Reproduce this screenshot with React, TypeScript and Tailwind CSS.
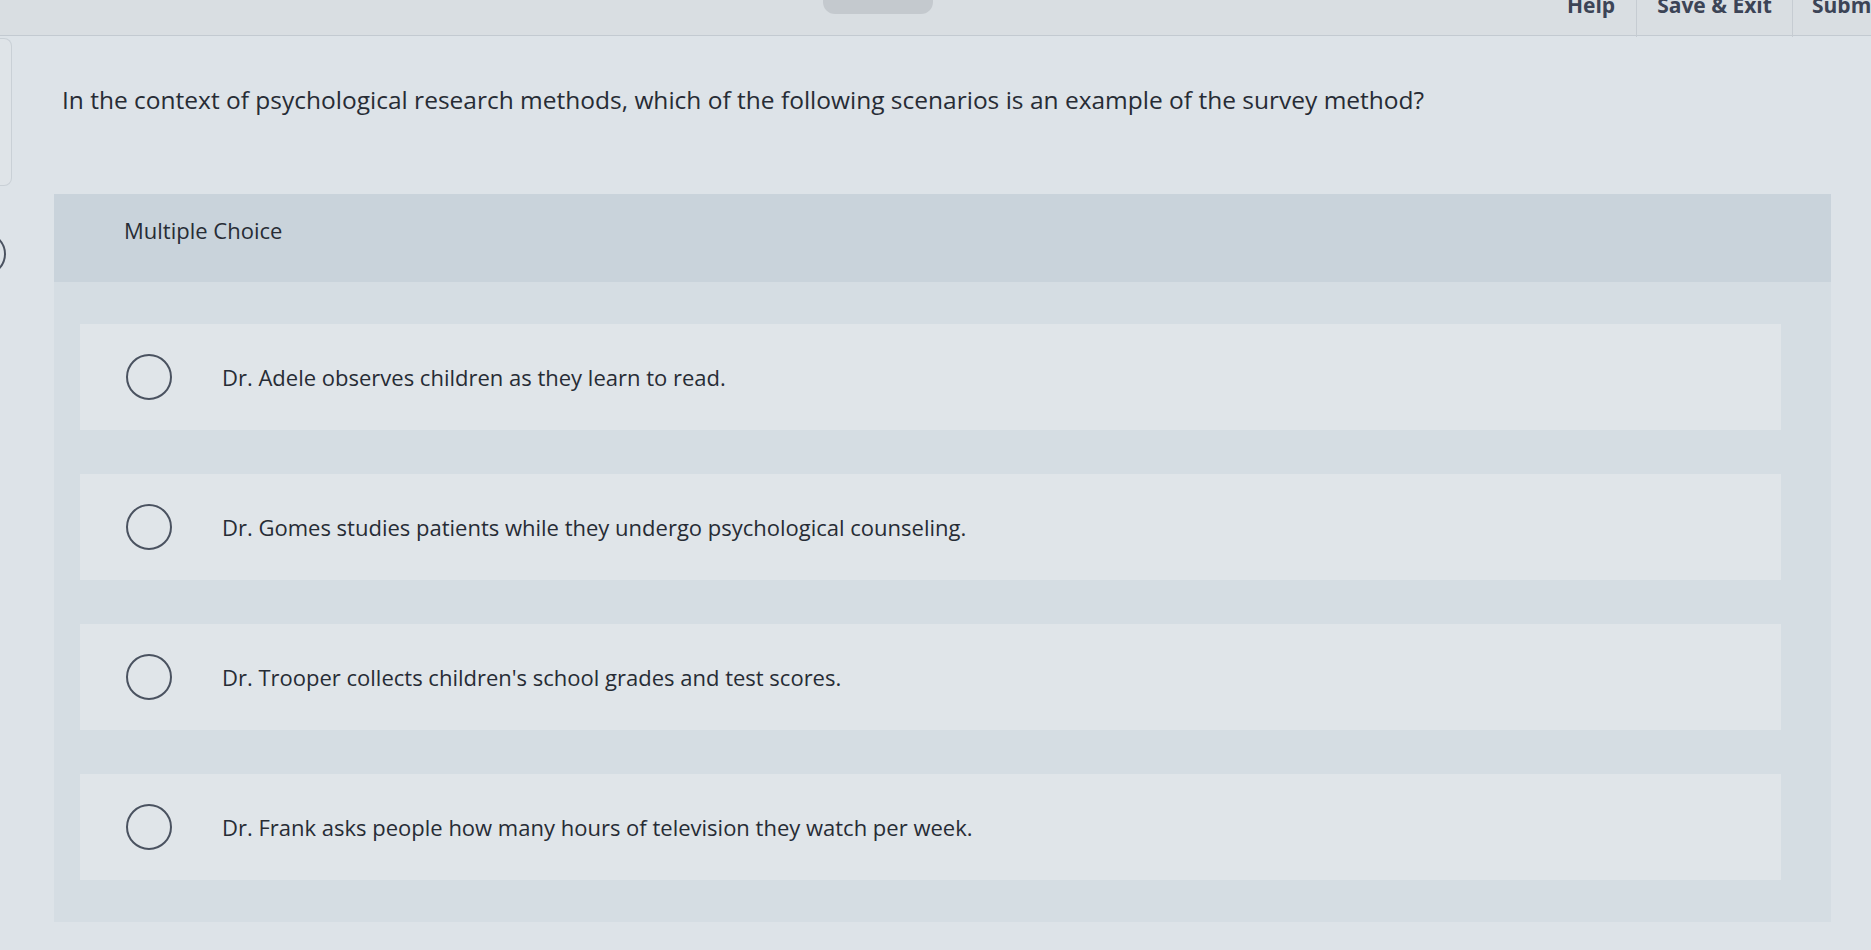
import { useState } from 'react';

const options = [
  'Dr. Adele observes children as they learn to read.',
  'Dr. Gomes studies patients while they undergo psychological counseling.',
  "Dr. Trooper collects children's school grades and test scores.",
  'Dr. Frank asks people how many hours of television they watch per week.',
];

export default function App() {
  const [selected, setSelected] = useState<number | null>(null);

  return (
    <div className="relative min-h-screen w-full overflow-hidden bg-[#dde3e8] text-[#272c35] font-['Open_Sans',sans-serif]">
      {/* Top bar */}
      <div className="relative h-[36px] border-b border-[#c3cad1] bg-[#d9dee2]">
        <div className="absolute left-[823px] top-0 h-[14px] w-[110px] rounded-b-xl bg-[#c4c9ce]" />
        <div className="absolute right-0 top-[-7px] flex items-start text-[21px] font-bold leading-[24px] text-[#3c4456]">
          <span className="w-[90px] text-center">Help</span>
          <span className="h-[44px] w-px bg-[#c6ccd2]" />
          <span className="w-[155px] text-center">Save &amp; Exit</span>
          <span className="h-[44px] w-px bg-[#c6ccd2]" />
          <span className="w-[78px] overflow-hidden whitespace-nowrap pl-[19px]">Submit</span>
        </div>
      </div>

      {/* side toggle peeking from the left edge */}
      <div className="absolute left-[-38px] top-[232px] h-[44px] w-[44px] rounded-full border-[2px] border-[#4a5260]" />

      <div className="flex">
        {/* Left edge card sliver */}
        <div className="mt-[2px] h-[148px] w-[12px] rounded-r-lg border border-l-0 border-[#c9d0d6] bg-[#dfe4e8]" />

        <div className="flex-1">
          <p className="ml-[50px] mt-[49px] text-[24.5px] font-[500] leading-[30px]">
            In the context of psychological research methods, which of the following scenarios is an example of the survey method?
          </p>

          <div className="ml-[42px] mr-[40px] mt-[79px]">
            <div className="h-[88px] bg-[#c9d3db] pl-[70px] pt-[20px] text-[22px] font-[500]">Multiple Choice</div>
            <div className="flex flex-col gap-[44px] bg-[#d5dde3] pb-[42px] pl-[26px] pr-[50px] pt-[42px]">
              {options.map((o, i) => (
                <button
                  key={i}
                  onClick={() => setSelected(i)}
                  className="flex h-[106px] items-center bg-[#e0e5e9] pl-[46px] text-left"
                >
                  <span className="flex h-[46px] w-[46px] shrink-0 items-center justify-center rounded-full border-[2px] border-[#4a5260]">
                    {selected === i && <span className="h-[24px] w-[24px] rounded-full bg-[#4a5260]" />}
                  </span>
                  <span className="ml-[50px] text-[22px] font-[500]">{o}</span>
                </button>
              ))}
            </div>
          </div>
        </div>
      </div>
    </div>
  );
}
